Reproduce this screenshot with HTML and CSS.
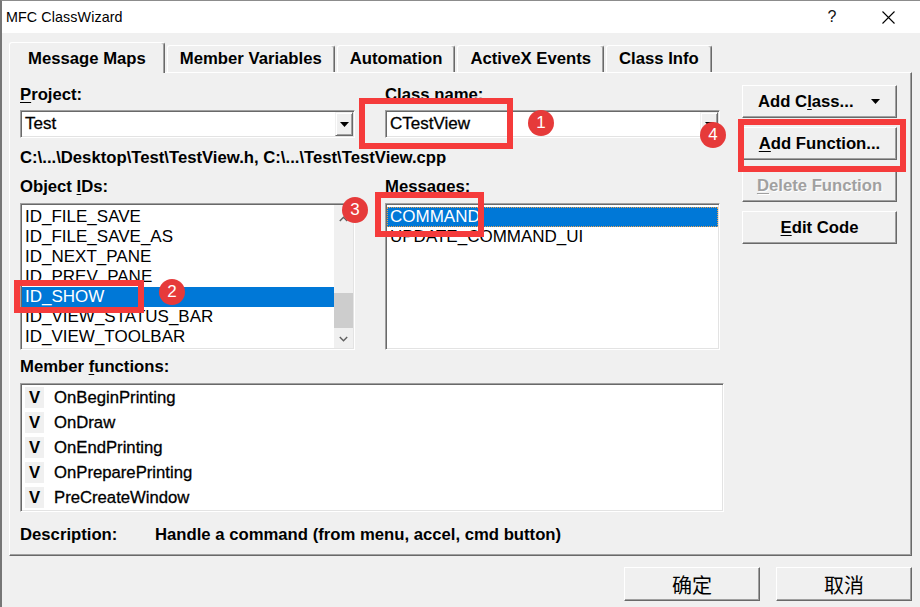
FILE: index.html
```html
<!DOCTYPE html>
<html>
<head>
<meta charset="utf-8">
<title>MFC ClassWizard</title>
<link rel="stylesheet" href="styles.css">
</head>
<body>
<div class="window">
  <div class="titlebar">
    <span class="title">MFC ClassWizard</span>
    <span class="help">?</span>
    <span class="close"><svg width="13" height="13" viewBox="0 0 13 13"><path d="M0.5 0.5 L12.5 12.5 M12.5 0.5 L0.5 12.5" stroke="#000" stroke-width="1.1" fill="none"/></svg></span>
  </div>

  <div class="tabs">
    <div class="tab active">Message Maps</div>
    <div class="tab">Member Variables</div>
    <div class="tab">Automation</div>
    <div class="tab">ActiveX Events</div>
    <div class="tab">Class Info</div>
  </div>

  <div class="panel">
    <div class="main">
      <div class="pair">
        <div class="col">
          <div class="label"><u>P</u>roject:</div>
          <div class="combo">
            <div class="combo-text">Test</div>
            <div class="drop"><svg width="9" height="5" viewBox="0 0 9 5"><path d="M0 0 H9 L4.5 5 Z" fill="#000"/></svg></div>
          </div>
        </div>
        <div class="col">
          <div class="label">Class <u>n</u>ame:</div>
          <div class="combo">
            <div class="combo-text">CTestView</div>
            <div class="drop"><svg width="9" height="5" viewBox="0 0 9 5"><path d="M0 0 H9 L4.5 5 Z" fill="#000"/></svg></div>
          </div>
        </div>
      </div>

      <div class="path">C:\...\Desktop\Test\TestView.h, C:\...\Test\TestView.cpp</div>

      <div class="pair lists">
        <div class="col">
          <div class="label">Object <u>I</u>Ds:</div>
          <div class="listbox">
            <div class="items">
              <div class="item">ID_FILE_SAVE</div>
              <div class="item">ID_FILE_SAVE_AS</div>
              <div class="item">ID_NEXT_PANE</div>
              <div class="item">ID_PREV_PANE</div>
              <div class="item sel">ID_SHOW</div>
              <div class="item">ID_VIEW_STATUS_BAR</div>
              <div class="item">ID_VIEW_TOOLBAR</div>
            </div>
            <div class="scrollbar">
              <div class="sb-up"><svg width="9" height="6" viewBox="0 0 9 6"><path d="M0.8 5 L4.5 1.2 L8.2 5" stroke="#606060" stroke-width="1.4" fill="none"/></svg></div>
              <div class="sb-track"><div class="sb-thumb"></div></div>
              <div class="sb-down"><svg width="9" height="6" viewBox="0 0 9 6"><path d="M0.8 1 L4.5 4.8 L8.2 1" stroke="#606060" stroke-width="1.4" fill="none"/></svg></div>
            </div>
          </div>
        </div>
        <div class="col">
          <div class="label">Me<u>s</u>sages:</div>
          <div class="listbox">
            <div class="items">
              <div class="item sel focus">COMMAND</div>
              <div class="item">UPDATE_COMMAND_UI</div>
            </div>
          </div>
        </div>
      </div>

      <div class="label member-label">Member <u>f</u>unctions:</div>
      <div class="members">
        <div class="fn"><span class="fn-v">V</span><span class="fn-name">OnBeginPrinting</span></div>
        <div class="fn"><span class="fn-v">V</span><span class="fn-name">OnDraw</span></div>
        <div class="fn"><span class="fn-v">V</span><span class="fn-name">OnEndPrinting</span></div>
        <div class="fn"><span class="fn-v">V</span><span class="fn-name">OnPreparePrinting</span></div>
        <div class="fn"><span class="fn-v">V</span><span class="fn-name">PreCreateWindow</span></div>
      </div>

      <div class="desc">
        <span class="desc-label">Description:</span>
        <span class="desc-text">Handle a command (from menu, accel, cmd button)</span>
      </div>
    </div>

    <div class="side">
      <div class="btn btn-split"><span>Add C<u>l</u>ass...</span><svg width="9" height="5" viewBox="0 0 9 5"><path d="M0 0 H9 L4.5 5 Z" fill="#000"/></svg></div>
      <div class="btn"><span><u>A</u>dd Function...</span></div>
      <div class="btn disabled"><span><u>D</u>elete Function</span></div>
      <div class="btn"><span><u>E</u>dit Code</span></div>
    </div>
  </div>

  <div class="footer">
    <div class="btn cjk">确定</div>
    <div class="btn cjk">取消</div>
  </div>

  <div class="mark mark-1"></div>
  <div class="mark mark-2"></div>
  <div class="mark mark-3"></div>
  <div class="mark mark-4"></div>
  <div class="badge badge-1">1</div>
  <div class="badge badge-2">2</div>
  <div class="badge badge-3">3</div>
  <div class="badge badge-4">4</div>
</div>
</body>
</html>
```

FILE: styles.css
```css
* { box-sizing: border-box; }
html, body { margin: 0; padding: 0; }
body {
  background: #f0f0f0;
  font-family: "Liberation Sans", Arial, sans-serif;
  color: #000;
}
u { text-decoration: underline; text-underline-offset: 2px; text-decoration-thickness: 1px; }

.window {
  position: relative;
  width: 920px;
  height: 607px;
  background: #f0f0f0;
  border-left: 2px solid #767676;
  border-top: 1px solid #8c8c8c;
  overflow: hidden;
}

/* title bar */
.titlebar {
  height: 32px;
  background: #fff;
  display: flex;
  align-items: center;
  padding-left: 4px;
}
.title { font-size: 14.3px; letter-spacing: 0.1px; }
.help {
  margin-left: auto;
  width: 48px;
  text-align: center;
  font-size: 16px;
  color: #111;
}
.close {
  width: 64px;
  display: flex;
  justify-content: center;
  align-items: center;
}

/* tabs */
.tabs {
  display: flex;
  align-items: flex-end;
  height: 30px;
  margin: 9px 0 0 7px;
  position: relative;
  z-index: 2;
}
.tab {
  height: 27px;
  padding: 0 12px;
  font-size: 16.7px;
  font-weight: bold;
  line-height: 26px;
  background: #f0f0f0;
  border: 1px solid;
  border-color: #fff #696969 transparent #fff;
  border-bottom: none;
  box-shadow: inset -1px 0 #a0a0a0;
  border-radius: 3px 3px 0 0;
  white-space: nowrap;
}
.tab + .tab { margin-left: 2px; }
.tab.active {
  height: 31px;
  padding: 3px 18px 0;
  margin-bottom: -1px;
}

/* panel */
.panel {
  display: flex;
  height: 484px;
  margin: 0 8px 0 7px;
  padding: 12px 0 0 10px;
  border: 1px solid;
  border-color: #fff #696969 #696969 #fff;
  box-shadow: inset -1px -1px #a0a0a0;
  position: relative;
  z-index: 1;
}
.main { width: 704px; display: flex; flex-direction: column; }
.pair { display: flex; gap: 30px; }
.col { width: 335px; }
.label, .path, .desc {
  font-size: 16.7px;
  font-weight: bold;
  line-height: 20px;
  height: 20px;
  white-space: nowrap;
}
.path { margin-top: 10px; }
.lists { margin-top: 9px; }
.member-label { margin-top: 7px; }

.combo {
  margin-top: 5px;
  height: 28px;
  display: flex;
  background: #fff;
  padding: 1px;
  border: 1px solid;
  border-color: #a0a0a0 #fff #fff #a0a0a0;
  box-shadow: inset 1px 1px #696969, inset -1px -1px #e3e3e3;
}
.combo-text {
  flex: 1;
  font-size: 17px;
  line-height: 24px;
  padding-left: 3px;
  -webkit-text-stroke: 0.3px #000;
}
.drop {
  width: 18px;
  background: #f0f0f0;
  border: 1px solid;
  border-color: #f0f0f0 #696969 #696969 #f0f0f0;
  box-shadow: inset 1px 1px #fff, inset -1px -1px #a0a0a0;
  display: flex;
  align-items: center;
  justify-content: center;
}

.listbox, .members {
  margin-top: 6px;
  background: #fff;
  padding: 1px;
  border: 1px solid;
  border-color: #a0a0a0 #fff #fff #a0a0a0;
  box-shadow: inset 1px 1px #696969, inset -1px -1px #e3e3e3;
}
.listbox { height: 147px; display: flex; }
.items { flex: 1; padding-top: 2px; }
.item {
  height: 20px;
  line-height: 20px;
  font-size: 17px;
  padding-left: 3px;
  white-space: nowrap;
}
.item.sel { background: #0078d7; color: #fff; }
.item.focus { outline: 1px dotted #e8a050; outline-offset: -1px; }

.scrollbar {
  width: 19px;
  background: #f0f0f0;
  display: flex;
  flex-direction: column;
}
.sb-up { height: 26px; display: flex; align-items: center; justify-content: center; padding-top: 2px; }
.sb-track { flex: 1; padding-top: 62px; }
.sb-thumb { height: 35px; background: #cdcdcd; }
.sb-down { height: 18px; display: flex; align-items: center; justify-content: center; }

.members { height: 129px; }
.fn { display: flex; align-items: center; height: 25px; }
.fn-v {
  width: 19px;
  height: 21px;
  margin-left: 3px;
  background: #f0f0f0;
  text-align: center;
  font-weight: bold;
  font-size: 16.7px;
  line-height: 21px;
}
.fn-name { margin-left: 10px; font-size: 16.7px; -webkit-text-stroke: 0.3px #000; }

.desc { margin-top: 13px; display: flex; }
.desc-label { width: 135px; }

/* buttons */
.side {
  margin-left: 18px;
  width: 155px;
  display: flex;
  flex-direction: column;
  gap: 9px;
}
.btn {
  height: 33px;
  display: flex;
  align-items: center;
  justify-content: center;
  font-size: 16.7px;
  font-weight: bold;
  background: #f0f0f0;
  border: 1px solid;
  border-color: #fff #696969 #696969 #fff;
  box-shadow: inset -1px -1px #a0a0a0;
  white-space: nowrap;
}
.btn-split { justify-content: space-between; padding: 0 16px 0 15px; }
.btn.disabled { color: #a0a0a0; text-shadow: 1px 1px #fff; }

.footer {
  display: flex;
  justify-content: flex-end;
  gap: 16px;
  margin-top: 11px;
  padding-right: 8px;
}
.btn.cjk {
  width: 136px;
  height: 34px;
  font-family: "Noto Sans CJK SC", "Liberation Sans", sans-serif;
  font-weight: normal;
  font-size: 20px;
}

/* annotations */
.mark {
  position: absolute;
  border: 6px solid #f53b3b;
  z-index: 5;
}
.mark-1 { left: 357px; top: 97px; width: 154px; height: 51px; }
.mark-2 { left: 12px; top: 279px; width: 130px; height: 33px; }
.mark-3 { left: 373px; top: 191px; width: 109px; height: 45px; }
.mark-4 { left: 736px; top: 118px; width: 168px; height: 53px; }

.badge {
  position: absolute;
  width: 26px;
  height: 26px;
  border-radius: 50%;
  background: #e63a3a;
  color: #fff;
  font-size: 17px;
  line-height: 26px;
  text-align: center;
  z-index: 6;
}
.badge-1 { left: 526px; top: 109px; }
.badge-2 { left: 157px; top: 278px; }
.badge-3 { left: 340px; top: 196px; }
.badge-4 { left: 698px; top: 121px; }
```
